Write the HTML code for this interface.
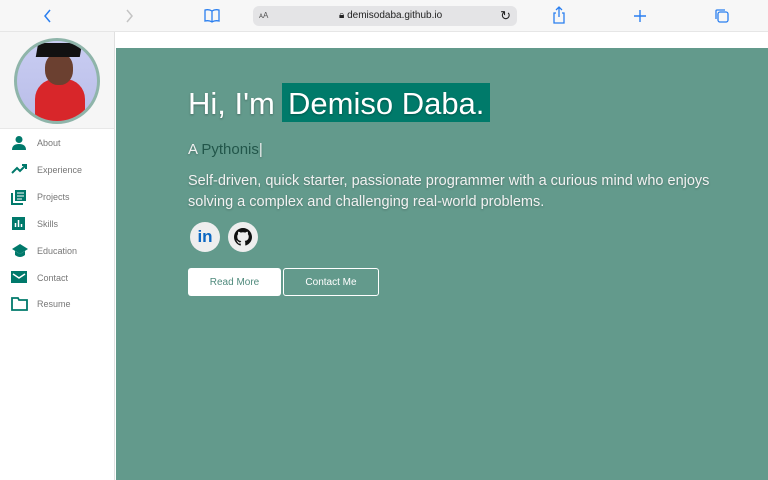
<!DOCTYPE html>
<html><head><style>
*{margin:0;padding:0;box-sizing:border-box}
body{width:768px;height:480px;overflow:hidden;background:#fff;font-family:"Liberation Sans",sans-serif;position:relative}
.top{position:absolute;left:0;top:0;width:768px;height:32px;background:#f7f7f7;border-bottom:1px solid #e6e6e6}
.url{position:absolute;left:253px;top:6px;width:264px;height:20px;background:#e4e4e6;border-radius:6px;font-size:10px;color:#222}
.side{position:absolute;left:0;top:32px;width:115px;height:448px;background:#fff;border-right:1px solid #e0e0e0}
.av{height:97px;background:#f6f6f6;position:relative;border-bottom:1px solid #e8e8e8}
.circ{position:absolute;left:14px;top:6px;width:86px;height:86px;border-radius:50%;border:3px solid #8fb5aa;background:linear-gradient(#c9cdf2,#b9bde8);overflow:hidden}
.nav{position:absolute;left:0;width:115px;height:20px;font-size:9px;color:#777}
.nav span{position:absolute;left:37px;top:5px}
.nav svg{position:absolute;left:11px;top:2px}
.main{position:absolute;left:116px;top:48px;width:652px;height:432px;background:#639a8c}
.white{position:absolute;left:116px;top:32px;width:652px;height:16px;background:#fff}
.h1{position:absolute;top:86px;font-size:31px;color:#fff;white-space:nowrap;text-shadow:0 1px 2px rgba(0,0,0,.3)}
.hl{position:absolute;left:282px;top:83px;width:208px;height:39px;background:#007a6a}
.t{position:absolute;color:#f2f2f2;text-shadow:0 1px 2px rgba(0,0,0,.25)}
.ic{position:absolute;top:222px;width:30px;height:30px;border-radius:50%;background:#eee;display:flex;align-items:center;justify-content:center}
.btn{position:absolute;top:268px;height:28px;border-radius:3px;font-size:10px;display:flex;align-items:center;justify-content:center}
</style></head><body>
<div class="top">
<svg style="position:absolute;left:43px;top:9px" width="10" height="14"><path d="M7 1L2 7l5 6" stroke="#2a7ff0" stroke-width="1.5" fill="none"/></svg>
<svg style="position:absolute;left:124px;top:9px" width="10" height="14"><path d="M3 1l5 6-5 6" stroke="#c4c4c4" stroke-width="1.5" fill="none"/></svg>
<svg style="position:absolute;left:204px;top:8px" width="16" height="15"><path d="M1 2q4-1 7 1q3-2 7-1v11q-4-1-7 1q-3-2-7-1z M8 3v11" stroke="#2a7ff0" stroke-width="1.3" fill="none"/></svg>
<div class="url"><span style="position:absolute;left:6px;top:5px;font-size:8px;color:#555">ᴀA</span>
<span style="position:absolute;left:86px;top:4px">🔒︎ demisodaba.github.io</span>
<span style="position:absolute;right:6px;top:2px;font-size:13px">↻</span></div>
<svg style="position:absolute;left:552px;top:6px" width="14" height="18"><path d="M4 7H2v10h10V7h-2M7 1v10M4 4l3-3 3 3" stroke="#2a7ff0" stroke-width="1.3" fill="none"/></svg>
<svg style="position:absolute;left:633px;top:9px" width="14" height="14"><path d="M7 1v12M1 7h12" stroke="#2a7ff0" stroke-width="1.4"/></svg>
<svg style="position:absolute;left:714px;top:8px" width="16" height="16"><rect x="4" y="4" width="10" height="10" rx="2" stroke="#2a7ff0" stroke-width="1.3" fill="none"/><path d="M2 11V3q0-1 1-1h8" stroke="#2a7ff0" stroke-width="1.3" fill="none"/></svg>
</div>
<div class="white"></div>
<div class="main"></div>
<div class="side">
<div class="av"><div class="circ">
<div style="position:absolute;left:18px;top:38px;width:50px;height:46px;background:#d8262a;border-radius:20px 20px 0 0"></div>
<div style="position:absolute;left:28px;top:12px;width:28px;height:32px;background:#6b4030;border-radius:45%"></div>
<div style="position:absolute;left:20px;top:2px;width:44px;height:14px;background:#111;transform:skewX(-10deg)"></div>
</div></div>
<div class="nav" style="top:101px"><svg width="16" height="16"><circle cx="8" cy="4.5" r="3.5" fill="#00796b"/><path d="M1 15q0-6 7-6t7 6z" fill="#00796b"/></svg><span>About</span></div>
<div class="nav" style="top:128px"><svg width="18" height="14"><path d="M1 11l5-5 3 3 6-6M11 3h4v4" stroke="#00796b" stroke-width="2" fill="none"/></svg><span>Experience</span></div>
<div class="nav" style="top:155px"><svg width="16" height="16"><rect x="4" y="1" width="11" height="11" fill="#00796b"/><path d="M6 4h7M6 7h7M6 10h5" stroke="#fff"/><path d="M1 4v11h11" stroke="#00796b" stroke-width="2" fill="none"/></svg><span>Projects</span></div>
<div class="nav" style="top:182px"><svg width="16" height="16"><rect x="1" y="1" width="13" height="13" fill="#00796b"/><path d="M4.5 11V7M7.5 11V4M10.5 11V8" stroke="#fff" stroke-width="1.5"/></svg><span>Skills</span></div>
<div class="nav" style="top:209px"><svg width="18" height="16"><path d="M9 1L1 6l8 5 8-5z" fill="#00796b"/><path d="M4 8v4q5 4 10 0V8l-5 3z" fill="#00796b"/></svg><span>Education</span></div>
<div class="nav" style="top:236px"><svg width="16" height="14"><rect x="0" y="1" width="16" height="12" fill="#00796b"/><path d="M2 4l6 4 6-4" stroke="#fff" stroke-width="1.5" fill="none"/></svg><span>Contact</span></div>
<div class="nav" style="top:262px"><svg width="17" height="15"><path d="M1 2h6l1 2h8v10H1z" stroke="#00796b" stroke-width="1.8" fill="none"/></svg><span>Resume</span></div>
</div>
<div class="hl"></div>
<div class="h1" style="left:188px">Hi, I'm</div>
<div class="h1" style="left:288px">Demiso Daba.</div>
<div class="t" style="left:188px;top:141px;font-size:15px">A <span style="color:#22564a;text-shadow:none">Pythonis</span>|</div>
<div class="t" style="left:188px;top:171px;font-size:14.5px;line-height:21px;width:560px">Self-driven, quick starter, passionate programmer with a curious mind who enjoys solving a complex and challenging real-world problems.</div>
<div class="ic" style="left:190px"><span style="color:#0a66c2;font-weight:bold;font-size:17px">in</span></div>
<div class="ic" style="left:228px"><svg width="18" height="18" viewBox="0 0 16 16"><path fill="#111" d="M8 0C3.6 0 0 3.6 0 8c0 3.5 2.3 6.5 5.5 7.6.4.1.5-.2.5-.4v-1.4c-2.200.5-2.700-1-2.700-1-.4-.9-.9-1.200-.9-1.200-.7-.5.1-.5.1-.5.8.1 1.200.8 1.200.8.7 1.200 1.900.9 2.300.7.1-.5.3-.9.5-1.100-1.800-.2-3.600-.9-3.600-4 0-.9.3-1.600.8-2.100-.1-.2-.4-1 .1-2.100 0 0 .7-.2 2.200.8.6-.2 1.300-.3 2-.3s1.400.1 2 .3c1.500-1 2.200-.8 2.200-.8.4 1.100.2 1.900.1 2.100.5.6.8 1.300.8 2.100 0 3.100-1.900 3.700-3.600 3.900.3.3.5.8.5 1.500v2.200c0 .2.1.5.6.4C13.700 14.500 16 11.500 16 8c0-4.400-3.600-8-8-8z"/></svg></div>
<div class="btn" style="left:188px;width:93px;background:#fff;color:#4f8a7c">Read More</div>
<div class="btn" style="left:283px;width:96px;border:1.5px solid #fff;color:#fff">Contact Me</div>
</body></html>
